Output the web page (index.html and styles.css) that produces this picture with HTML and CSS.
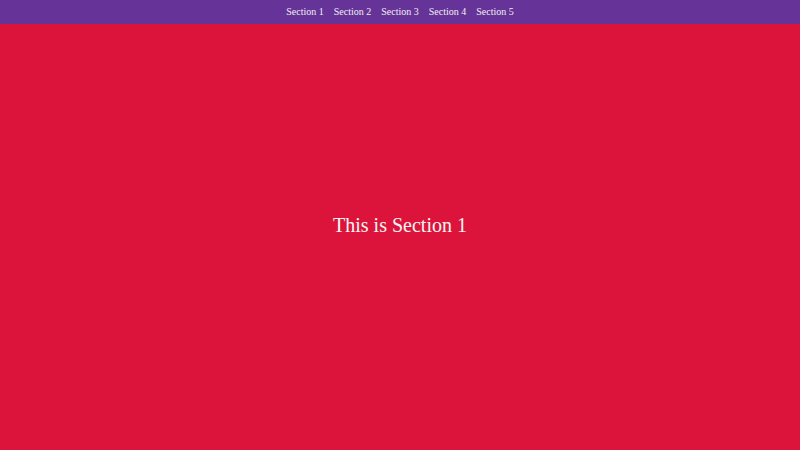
FILE: index.html
```html
<!DOCTYPE html>
<html>
<head>
<meta charset="utf-8">
<link rel="stylesheet" href="styles.css">
</head>
<body>
<nav class="nav">
  <a class="nav-link" href="#s1">Section 1</a>
  <a class="nav-link" href="#s2">Section 2</a>
  <a class="nav-link" href="#s3">Section 3</a>
  <a class="nav-link" href="#s4">Section 4</a>
  <a class="nav-link" href="#s5">Section 5</a>
</nav>
<section class="section" id="s1">
  <h1 class="title">This is Section 1</h1>
</section>
</body>
</html>
```
FILE: styles.css
```css
html, body { margin: 0; padding: 0; }
body { font-family: "Liberation Serif", serif; background: #dc143c; overflow: hidden; }
.nav {
  position: fixed; top: 0; left: 0; right: 0;
  height: 24px; box-sizing: border-box; padding-bottom: 1px; background: #663399;
  display: flex; justify-content: center; align-items: center; gap: 10px;
  z-index: 2;
}
.nav-link { color: #f0f0f0; text-decoration: none; font-size: 10px; }
.section {
  height: 450px; display: flex; align-items: center; justify-content: center;
  background: #dc143c;
}
.title { margin: 0; font-weight: normal; font-size: 20px; color: #f4f4f4; }
```
